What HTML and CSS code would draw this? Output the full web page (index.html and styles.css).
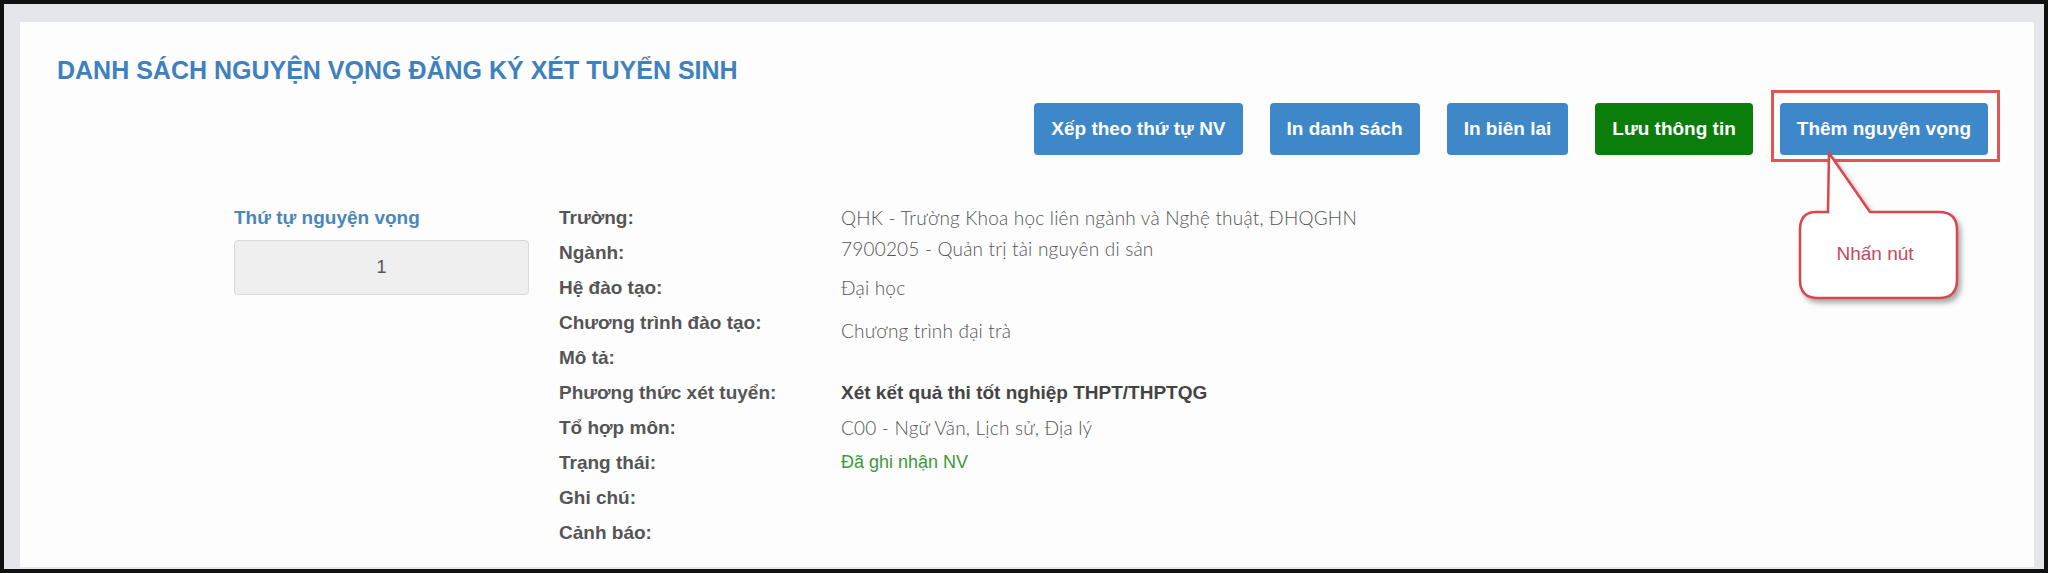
FILE: index.html
```html
<!DOCTYPE HTML>
<html>

<head>
  <meta charset="utf-8">
  <link rel="stylesheet" href="styles.css">
</head>

<body>
  <div class="frame">
    <div class="panel">
      <h2 class="title">DANH SÁCH NGUYỆN VỌNG ĐĂNG KÝ XÉT TUYỂN SINH</h2>

      <div class="toolbar">
        <button class="btn" type="button">Xếp theo thứ tự NV</button>
        <button class="btn" type="button">In danh sách</button>
        <button class="btn" type="button">In biên lai</button>
        <button class="btn btn-green" type="button">Lưu thông tin</button>
        <button class="btn" type="button">Thêm nguyện vọng</button>
      </div>

      <div class="content">
        <div class="order">
          <div class="order-label">Thứ tự nguyện vọng</div>
          <div class="order-box">1</div>
        </div>

        <div class="details">
          <div class="label">Trường:</div>
          <div class="value">QHK - Trường Khoa học liên ngành và Nghệ thuật, ĐHQGHN</div>
          <div class="label">Ngành:</div>
          <div class="value up">7900205 - Quản trị tài nguyên di sản</div>
          <div class="label">Hệ đào tạo:</div>
          <div class="value">Đại học</div>
          <div class="label">Chương trình đào tạo:</div>
          <div class="value down">Chương trình đại trà</div>
          <div class="label">Mô tả:</div>
          <div class="value"></div>
          <div class="label">Phương thức xét tuyển:</div>
          <div class="value strong">Xét kết quả thi tốt nghiệp THPT/THPTQG</div>
          <div class="label">Tổ hợp môn:</div>
          <div class="value">C00 - Ngữ Văn, Lịch sử, Địa lý</div>
          <div class="label">Trạng thái:</div>
          <div class="value status">Đã ghi nhận NV</div>
          <div class="label">Ghi chú:</div>
          <div class="value"></div>
          <div class="label">Cảnh báo:</div>
          <div class="value"></div>
        </div>
      </div>

      <!-- chú thích hướng dẫn -->
      <div class="highlight"></div>
      <svg class="callout" width="180" height="165" viewBox="0 0 180 165">
        <defs>
          <filter id="shadow" x="-20%" y="-20%" width="150%" height="150%">
            <feDropShadow dx="3" dy="4" stdDeviation="2.5" flood-color="#777" flood-opacity="0.6"/>
          </filter>
        </defs>
        <path d="M26 65 L38 65 L39 6 L80 65 L149 65 Q167 65 167 83 L167 133 Q167 151 149 151 L28 151 Q10 151 10 133 L10 83 Q10 65 26 65 Z"
              fill="#fff" stroke="#d9464b" stroke-width="2.5" stroke-linejoin="round" filter="url(#shadow)"/>
        <text x="85" y="113" text-anchor="middle" class="callout-text">Nhấn nút</text>
      </svg>
    </div>
  </div>
</body>

</html>
```

FILE: styles.css
```css
* {
  box-sizing: border-box;
}

body {
  margin: 0;
  font-family: "Liberation Sans", Arial, sans-serif;
}

.frame {
  height: 573px;
  border: 4px solid #111;
  background-color: #e4e6e9;
  padding: 18px 10px 2px 16px;
}

.panel {
  position: relative;
  height: 100%;
  background-color: #fdfdfd;
  padding: 34px 46px 0 37px;
}

.title {
  margin: 0;
  font-size: 25px;
  line-height: 29px;
  font-weight: bold;
  color: #3f80bf;
}

.toolbar {
  display: flex;
  justify-content: flex-end;
  gap: 27px;
  margin-top: 18px;
}

.btn {
  height: 52px;
  padding: 0 17px;
  border: none;
  border-radius: 4px;
  background-color: #3e87c9;
  color: #fff;
  font-family: "Liberation Sans", Arial, sans-serif;
  font-size: 19px;
  font-weight: bold;
}

.btn-green {
  background-color: #0a7d0a;
}

.content {
  display: flex;
  gap: 30px;
  margin-top: 45px;
  margin-left: 177px;
}

.order {
  width: 295px;
  padding-top: 7px;
}

.order-label {
  font-size: 19px;
  font-weight: bold;
  color: #4a86bc;
}

.order-box {
  margin-top: 11px;
  height: 55px;
  border: 1px solid #d9d9d9;
  border-radius: 4px;
  background-color: #efefef;
  color: #555;
  font-size: 18px;
  display: flex;
  align-items: center;
  justify-content: center;
}

.details {
  display: grid;
  grid-template-columns: 282px auto;
  grid-auto-rows: 35px;
  align-items: center;
}

.label {
  font-size: 19px;
  font-weight: bold;
  color: #555;
}

.value {
  font-family: Lato, "Liberation Sans", sans-serif;
  font-weight: 300;
  font-size: 19px;
  letter-spacing: 0.2px;
  color: #555;
}

.value.up {
  position: relative;
  top: -4px;
}

.value.down {
  position: relative;
  top: 8px;
}

.value.strong {
  font-family: "Liberation Sans", Arial, sans-serif;
  font-weight: bold;
  letter-spacing: 0;
  color: #444;
}

.value.status {
  font-family: "Liberation Sans", Arial, sans-serif;
  font-weight: normal;
  font-size: 18px;
  letter-spacing: 0;
  color: #3a9a3a;
}

.highlight {
  position: absolute;
  left: 1751px;
  top: 68px;
  width: 229px;
  height: 72px;
  border: 3px solid #df5558;
}

.callout {
  position: absolute;
  left: 1770px;
  top: 125px;
  overflow: visible;
}

.callout-text {
  font-family: "Liberation Sans", Arial, sans-serif;
  font-size: 19px;
  fill: #c4485a;
}
```
